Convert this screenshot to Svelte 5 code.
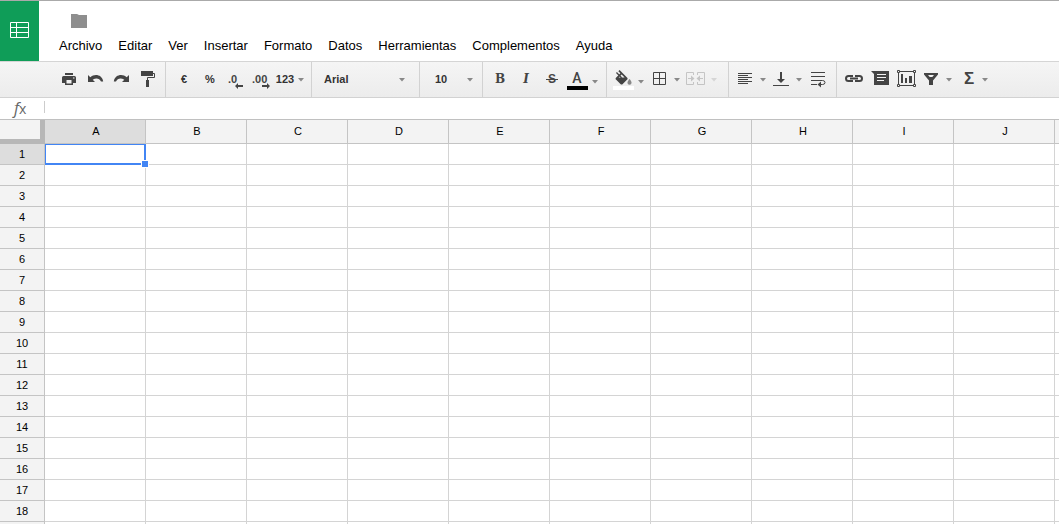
<script lang="ts">
    // Grid dimensions
    const columns = 'ABCDEFGHIJ'.split('');
    const rows = Array.from({ length: 18 }, (_, i) => i + 1);

    const menu = ['Archivo', 'Editar', 'Ver', 'Insertar', 'Formato', 'Datos', 'Herramientas', 'Complementos', 'Ayuda'];

    let activeColumn = 'A';
    let activeRow = 1;
    let font = 'Arial';
    let size = '10';
    let formula = '';
</script>

{#snippet arrow(low = false)}
    <svg class="arrow" class:low viewBox="0 0 6 4" width="6" height="4" aria-hidden="true">
        <path d="M0 0h6L3 3.500z" />
    </svg>
{/snippet}

<div class="app">
    <header>
        <a class="logo" href="#home" aria-label="Inicio">
            <svg viewBox="0 0 19 16" width="19" height="16">
                <path d="M.5.5h18v15H.5zM1 5.500h17M1 10.500h17M6.500 1v14" fill="none" stroke="#fff" />
            </svg>
        </a>
        <div class="head">
            <button class="folder" aria-label="Carpeta">
                <svg viewBox="0 0 16 14" width="16" height="14"><path d="M0 0h6l2 1h8v13H0z" fill="#8e8e8e" /></svg>
            </button>
            <nav>
                {#each menu as item}
                    <button>{item}</button>
                {/each}
            </nav>
        </div>
    </header>

    <div class="toolbar" role="toolbar">
        <div class="group first">
            <button aria-label="Imprimir">
                <svg class="icon" viewBox="0 0 26 35">
                    <path d="M9 11h8v2H9zM7.500 14h11Q20 14 20 15.500V21h-3v2H9v-2H6v-5.500Q6 14 7.500 14z" />
                    <path d="M10.500 18h5v3.500h-5zM17 15.500h1.500v1H17z" fill="#f2f2f2" />
                </svg>
            </button>
            <button aria-label="Deshacer">
                <svg class="icon" viewBox="0 0 26 35">
                    <path d="M6 13v7h7l-2.300-2.300C14 15.500 17.500 16 19 19.500h2.200C20 12.500 12.500 11.500 8.300 15.300z" />
                </svg>
            </button>
            <button aria-label="Rehacer">
                <svg class="icon" viewBox="0 0 26 35">
                    <path transform="translate(27 0) scale(-1 1)" d="M6 13v7h7l-2.300-2.300C14 15.500 17.500 16 19 19.500h2.200C20 12.500 12.500 11.500 8.300 15.300z" />
                </svg>
            </button>
            <button aria-label="Copiar formato">
                <svg class="icon" viewBox="0 0 26 35">
                    <path d="M7 9h12v5H7zM12 18h3v7h-3z" />
                    <path class="line" d="M19 11.500h1.500v4h-7V18" />
                </svg>
            </button>
        </div>

        <div class="group">
            <button class="sign">€</button>
            <button class="sign">%</button>
            <button aria-label="Reducir decimales">
                <svg class="icon" viewBox="0 0 26 35">
                    <text x="6" y="21">.0</text>
                    <path d="M13 24l3-3v2h5v2h-5v2z" />
                </svg>
            </button>
            <button aria-label="Aumentar decimales">
                <svg class="icon" viewBox="0 0 26 35">
                    <text x="4" y="21">.00</text>
                    <path d="M22 24l-3-3v2h-5v2h5v2z" />
                </svg>
            </button>
            <button class="number"><span>123</span>{@render arrow()}</button>
        </div>

        <label class="group picker family">
            <select bind:value={font} aria-label="Fuente">
                <option>Arial</option>
                <option>Verdana</option>
            </select>
            {@render arrow()}
        </label>

        <label class="group picker size">
            <select bind:value={size} aria-label="Tamaño">
                <option>10</option>
                <option>12</option>
            </select>
            {@render arrow()}
        </label>

        <div class="group">
            <button aria-label="Negrita">
                <svg class="icon" viewBox="0 0 26 35"><text class="slab" x="13" y="21">B</text></svg>
            </button>
            <button aria-label="Cursiva">
                <svg class="icon" viewBox="0 0 26 35"><text class="slab italic" x="13" y="21">I</text></svg>
            </button>
            <button aria-label="Tachado">
                <svg class="icon" viewBox="0 0 26 35">
                    <text class="strike" x="13" y="21">S</text>
                    <path d="M7 17h12v1H7z" />
                </svg>
            </button>
            <button class="drop" aria-label="Color de texto">
                <svg class="icon" viewBox="0 0 26 35">
                    <text class="letter" x="12" y="21">A</text>
                    <path d="M2 24h21v4H2z" fill="#000" />
                </svg>
                {@render arrow(true)}
            </button>
        </div>

        <div class="group">
            <button class="drop" aria-label="Color de relleno">
                <svg class="icon" viewBox="0 0 26 35">
                    <g transform="translate(2 8) scale(.86)">
                        <path d="M16.560 8.940L7.620 0 6.210 1.410l2.380 2.380-5.150 5.150c-.59.59-.59 1.540 0 2.120l5.500 5.500c.29.29.68.44 1.060.44s.77-.15 1.060-.44l5.500-5.500c.59-.58.59-1.530 0-2.120zM6.500 8.700L10 5.210 13.500 8.700z" />
                        <path d="M4 3l6 6" stroke="#444" stroke-width="1.500" />
                        <path d="M19.200 10.500s-2.400 2.500-2.400 4.200a2.400 2.400 0 0 0 4.800 0c0-1.700-2.400-4.200-2.400-4.200z" fill="#888" />
                    </g>
                    <path d="M2 24h21v4H2z" fill="#fff" />
                </svg>
                {@render arrow(true)}
            </button>
            <button class="drop" aria-label="Bordes">
                <svg class="icon" viewBox="0 0 26 35">
                    <path class="line" d="M6.500 10.500h12v12h-12zM12.500 10.500v12M6.500 16.500h12" />
                </svg>
                {@render arrow()}
            </button>
            <button class="drop merge" disabled aria-label="Combinar celdas">
                <svg class="icon" viewBox="0 0 26 35">
                    <path class="line" d="M10.500 13v-2.500h-7V13M10.500 20v2.500h-7V20M3.500 13v7M14.500 13v-2.500h7V13M14.500 20v2.500h7V20M21.500 13v7M5 16.500h5M20 16.500h-5" />
                    <path d="M8 13.500l3.500 3L8 19.500zM17 13.500l-3.500 3 3.500 3z" />
                </svg>
                {@render arrow()}
            </button>
        </div>

        <div class="group">
            <button class="drop" aria-label="Alineación horizontal">
                <svg class="icon" viewBox="0 0 26 35">
                    <path class="line" d="M5 11.500h14M5 13.500h10M5 15.500h14M5 17.500h10M5 19.500h14M5 21.500h10" />
                </svg>
                {@render arrow()}
            </button>
            <button class="drop" aria-label="Alineación vertical">
                <svg class="icon" viewBox="0 0 26 35">
                    <path d="M4 23h16v1H4zM11 10h2v7h3l-4 4-4-4h3z" />
                </svg>
                {@render arrow()}
            </button>
            <button aria-label="Ajuste de texto">
                <svg class="icon" viewBox="0 0 26 35">
                    <path class="line" d="M6 10.500h14M6 14.500h14M6 18.500h11.500q2.500 0 2.500 2t-2.500 2H15M6 22.500h6" />
                    <path d="M12.500 22.500l3.500-3v6z" />
                </svg>
            </button>
        </div>

        <div class="group last">
            <button aria-label="Insertar enlace">
                <svg class="icon" viewBox="0 0 26 35">
                    <path class="line" stroke-width="2" d="M12 14H7.500a2.500 2.500 0 0 0 0 5H12M14 14h4.500a2.500 2.500 0 0 1 0 5H14M9 16.500h8" />
                </svg>
            </button>
            <button aria-label="Insertar comentario">
                <svg class="icon" viewBox="0 0 26 35">
                    <path d="M4 9h18v14H7V12z" />
                    <path d="M10 12.500h9M10 15.500h9M10 18.500h7" stroke="#f2f2f2" />
                </svg>
            </button>
            <button aria-label="Insertar gráfico">
                <svg class="icon" viewBox="0 0 26 35">
                    <path class="line" d="M5.500 9.500h16v14h-16z" />
                    <path d="M8 12h2v9H8zM12 16h2v5h-2zM16 14h3v7h-3z" />
                    <path d="M4.500 8.500h2v2h-2zM20.500 8.500h2v2h-2zM4.500 22.500h2v2h-2zM20.500 22.500h2v2h-2z" fill="#f2f2f2" stroke="#444" />
                </svg>
            </button>
            <button class="drop" aria-label="Filtro">
                <svg class="icon" viewBox="0 0 26 35">
                    <path d="M5 11h14v1.500l-5 6V23h-4v-4.500l-5-6z" />
                    <path d="M9 13h6l-1.700 2h-2.600z" fill="#f2f2f2" />
                </svg>
                {@render arrow()}
            </button>
            <button class="drop" aria-label="Funciones">
                <svg class="icon" viewBox="0 0 26 35"><text class="sigma" x="14" y="22">Σ</text></svg>
                {@render arrow()}
            </button>
        </div>
    </div>

    <div class="formula">
        <label for="fx">f<span>x</span></label>
        <input id="fx" type="text" bind:value={formula} />
    </div>

    <div class="sheet">
        <table>
            <thead>
                <tr>
                    <td class="corner"></td>
                    {#each columns as column}
                        <th scope="col" class:active={column === activeColumn}>{column}</th>
                    {/each}
                    <td class="rest"></td>
                </tr>
            </thead>
            <tbody>
                {#each rows as row}
                    <tr>
                        <th scope="row" class:active={row === activeRow}>{row}</th>
                        {#each columns as column}
                            <td>
                                {#if row === activeRow && column === activeColumn}
                                    <div class="selection"><i></i></div>
                                {/if}
                            </td>
                        {/each}
                        <td class="rest"></td>
                    </tr>
                {/each}
                <tr>
                    <td class="side"></td>
                    {#each columns as column}
                        <td></td>
                    {/each}
                    <td class="rest"></td>
                </tr>
            </tbody>
        </table>
    </div>
</div>

<style>
    :global(body) {
        margin: 0;
        background: #fff;
    }

    .app {
        display: flex;
        flex-direction: column;
        height: 100vh;
        box-sizing: border-box;
        overflow: hidden;
        border-top: 1px solid #aaa;
        font-family: Arial, "Liberation Sans", sans-serif;
        color: #000;
    }

    button {
        padding: 0;
        border: 0;
        background: none;
        font: inherit;
        color: inherit;
    }

    svg {
        display: block;
        flex: none;
    }

    header {
        display: flex;
        flex: none;
        border-bottom: 1px solid #d5d5d5;
    }

    .logo {
        display: flex;
        align-items: center;
        justify-content: center;
        box-sizing: border-box;
        width: 39px;
        height: 60px;
        padding-bottom: 2px;
        background: #0f9d58;
    }

    .head {
        padding: 13px 0 0 20px;
    }

    .folder {
        display: block;
        margin-left: 12px;
    }

    nav {
        display: flex;
        gap: 16px;
        padding-top: 9px;
        font-size: 13px;
        line-height: 17px;
    }

    .toolbar {
        display: flex;
        flex: none;
        height: 35px;
        border-bottom: 1px solid #d2d2d2;
        background: linear-gradient(#f5f5f5, #ececec);
        font-size: 11px;
        font-weight: bold;
        color: #333;
    }

    .group {
        display: flex;
        flex: none;
        padding: 0 5px 0 4px;
        border-right: 1px solid #d2d2d2;
    }

    .group.first {
        padding-left: 56px;
    }

    .group.last {
        border-right: 0;
    }

    .group button {
        display: flex;
        align-items: center;
        justify-content: center;
        width: 26px;
    }

    .group .sign {
        padding: 0 0 2px 2px;
    }

    .group .drop {
        gap: 1px;
        justify-content: flex-start;
        width: 36px;
    }

    .group .merge {
        gap: 2px;
        width: 40px;
        opacity: 0.25;
    }

    .group .number {
        gap: 4px;
        width: 32px;
    }

    .number span {
        padding-bottom: 2px;
    }

    .icon {
        width: 26px;
        height: 35px;
        fill: #444;
    }

    .line {
        fill: none;
        stroke: #444;
    }

    .arrow {
        margin-top: 1px;
        fill: #888;
    }

    .arrow.low {
        margin-top: 5px;
    }

    .slab {
        font: bold 12px "DejaVu Serif", serif;
        text-anchor: middle;
    }

    .slab.italic {
        font-style: italic;
    }

    .strike {
        font: bold 12px "Liberation Sans", sans-serif;
        text-anchor: middle;
    }

    .letter {
        font: 500 14px Roboto, sans-serif;
        text-anchor: middle;
    }

    .sigma {
        font: bold 17px "Liberation Sans", sans-serif;
        text-anchor: middle;
    }

    .picker {
        align-items: center;
    }

    .family {
        width: 81px;
        padding: 0 14px 0 12px;
    }

    .size {
        width: 38px;
        padding: 0 9px 0 15px;
    }

    select {
        flex: 1;
        min-width: 0;
        padding: 0 0 2px;
        border: 0;
        appearance: none;
        background: none;
        font: inherit;
        color: inherit;
    }

    .formula {
        display: flex;
        flex: none;
        height: 21px;
        border-bottom: 1px solid #c0c0c0;
    }

    .formula label {
        width: 30px;
        padding-left: 14px;
        font: italic 16px/20px "Open Sans", sans-serif;
        color: #666;
    }

    .formula span {
        font-size: 14px;
        font-style: normal;
    }

    .formula input {
        flex: 1;
        height: 12px;
        margin-top: 3px;
        padding: 0 4px;
        border: 0;
        border-left: 1px solid #ccc;
        outline: 0;
        font: inherit;
        font-size: 13px;
    }

    .sheet {
        flex: 1;
        min-height: 0;
        overflow: hidden;
    }

    table {
        width: 100%;
        table-layout: fixed;
        border-spacing: 0;
        font-size: 11px;
        line-height: 20px;
    }

    th,
    td {
        box-sizing: border-box;
        width: 101px;
        height: 21px;
        padding: 0;
        border-right: 1px solid #d4d4d4;
        border-bottom: 1px solid #d4d4d4;
    }

    th,
    .side,
    thead td {
        border-color: #c4c4c4;
        background: #f3f3f3;
        font-weight: normal;
    }

    thead th {
        height: 24px;
        padding: 0 0 2px 2px;
    }

    th.active {
        background: #ddd;
    }

    .corner,
    .side,
    tbody th {
        width: 45px;
    }

    .corner {
        border-right: 5px solid #b7b7b7;
        border-bottom: 5px solid #b7b7b7;
    }

    /* takes whatever width is left after the last column */
    .rest {
        width: auto;
        border-right: 0;
    }

    tbody td {
        position: relative;
    }

    /* outline of the active cell, drawn over its grid lines */
    .selection {
        position: absolute;
        inset: 0 -1px -1px 0;
        border: solid #4285f4;
        border-width: 1px 2px 2px 1px;
        z-index: 1;
    }

    .selection i {
        position: absolute;
        right: -5px;
        bottom: -5px;
        width: 6px;
        height: 6px;
        border: 1px solid #fff;
        background: #4285f4;
    }
</style>
